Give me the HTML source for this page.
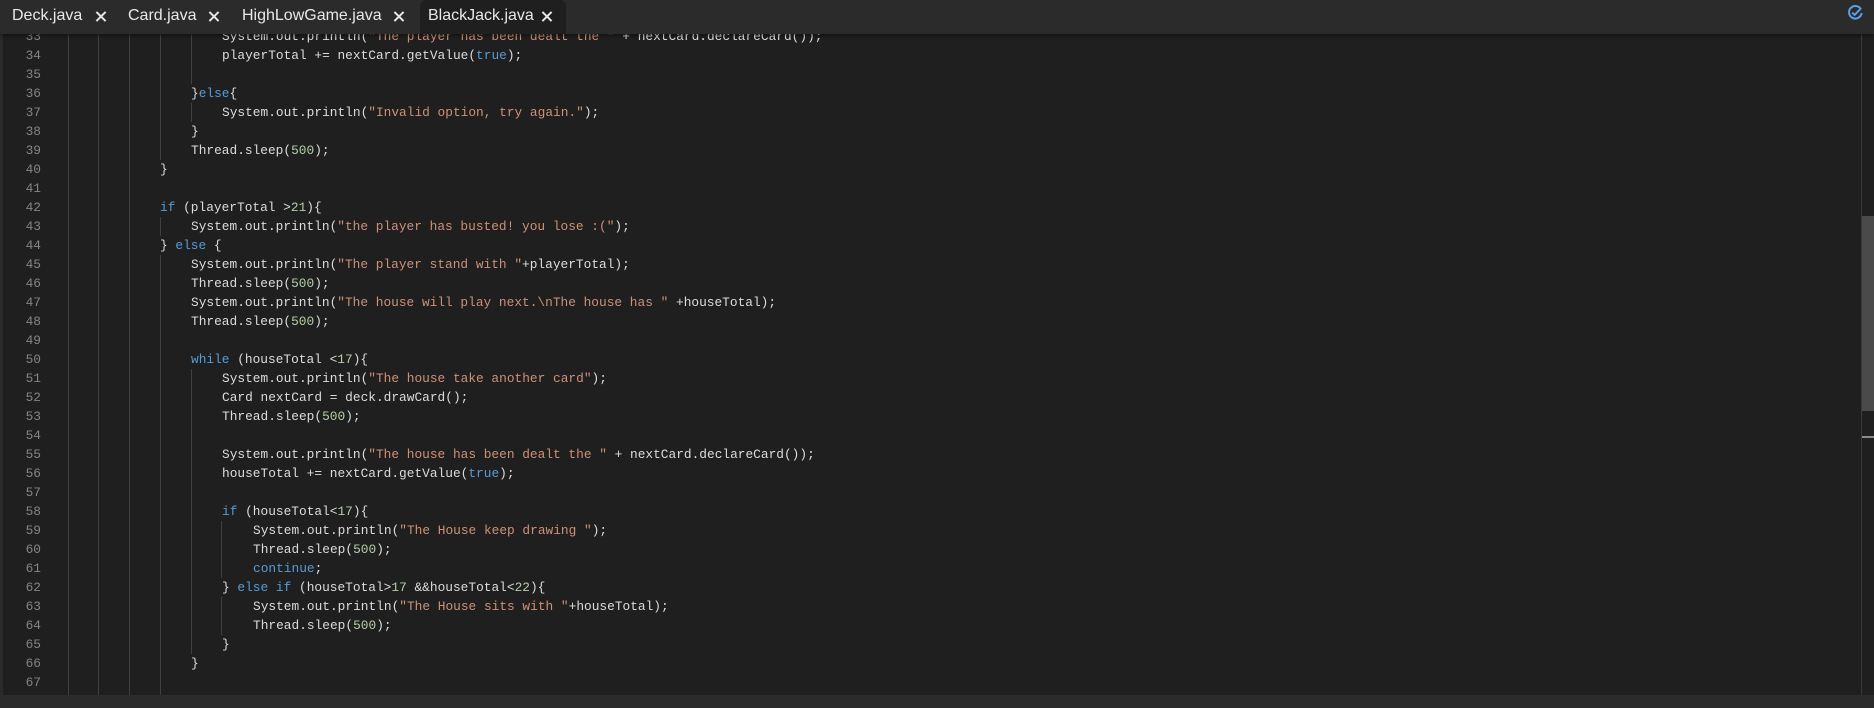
<!DOCTYPE html>
<html><head><meta charset="utf-8"><style>
*{margin:0;padding:0;box-sizing:border-box}
body{width:1874px;height:708px;background:#1f1f1f;position:relative;overflow:hidden;font-family:"Liberation Mono",monospace}
.bar{position:absolute;left:0;top:0;width:1874px;height:34px;background:#2b2b2b;box-shadow:0 2px 3px rgba(0,0,0,.4);z-index:5}
.tab{position:absolute;top:0;height:34px;font:16px "Liberation Sans",sans-serif;color:#e8e8e8;line-height:32px}
.x{position:absolute;top:11px;width:11px;height:11px}
.x:before,.x:after{content:"";position:absolute;left:4.5px;top:-1px;width:2px;height:13px;background:#e8e8e8;transform:rotate(45deg)}
.x:after{transform:rotate(-45deg)}
.act{position:absolute;left:420px;top:0;width:146px;height:34px;background:#1f1f1f;border-radius:6px 6px 0 0}
.ln{position:absolute;left:0;width:41px;text-align:right;color:#858585;font-size:12.83px;line-height:19px;height:19px}
.c{position:absolute;white-space:pre;color:#dcdcdc;font-size:12.83px;line-height:19px;height:19px}
.k{color:#569cd6}.s{color:#ce9178}.n{color:#b5cea8}
.g{position:absolute;width:1px;background:#404040}
.bot{position:absolute;left:0;top:695px;width:1874px;height:13px;background:#2b2b2b}
.sb{position:absolute;left:1861px;top:34px;width:1px;height:661px;background:#3a3a3a}
.th{position:absolute;left:1862px;top:216px;width:12px;height:195px;background:#4a4a4a}
</style></head><body>
<div class="bar">
<div class="act"></div>
<div class="tab" style="left:12px">Deck.java</div><div class="x" style="left:95px"></div>
<div class="tab" style="left:128px">Card.java</div><div class="x" style="left:208px"></div>
<div class="tab" style="left:242px">HighLowGame.java</div><div class="x" style="left:393px"></div>
<div class="tab" style="left:428px">BlackJack.java</div><div class="x" style="left:541px"></div>
<svg style="position:absolute;left:1847px;top:4px" width="17" height="17" viewBox="0 0 17 17"><path d="M14 5.5A6.3 6.3 0 1 0 14.6 9" fill="none" stroke="#5aa0e6" stroke-width="2"/><path d="M5.2 8.6l2.4 2.3 5.3-5.4" fill="none" stroke="#5aa0e6" stroke-width="2"/></svg>
</div>
<div style="position:absolute;left:0;top:34px;width:3px;height:661px;background:#2b2b2b"></div>
<!-- guides -->
<div class="g" style="left:68px;top:27px;height:668px"></div>
<div class="g" style="left:98px;top:27px;height:668px"></div>
<div class="g" style="left:129px;top:27px;height:668px"></div>
<div class="g" style="left:160px;top:27px;height:133px"></div>
<div class="g" style="left:160px;top:217px;height:19px"></div>
<div class="g" style="left:160px;top:255px;height:440px"></div>
<div class="g" style="left:191px;top:27px;height:57px"></div>
<div class="g" style="left:191px;top:103px;height:19px"></div>
<div class="g" style="left:191px;top:369px;height:285px"></div>
<div class="g" style="left:221px;top:521px;height:57px"></div>
<div class="g" style="left:221px;top:597px;height:38px"></div>

<div class="ln" style="top:27px">33</div><div class="c" style="left:222px;top:27px">System.out.println(<span class="s">"The player has been dealt the "</span> + nextCard.declareCard());</div>
<div class="ln" style="top:46px">34</div><div class="c" style="left:222px;top:46px">playerTotal += nextCard.getValue(<span class="k">true</span>);</div>
<div class="ln" style="top:65px">35</div>
<div class="ln" style="top:84px">36</div><div class="c" style="left:191px;top:84px">}<span class="k">else</span>{</div>
<div class="ln" style="top:103px">37</div><div class="c" style="left:222px;top:103px">System.out.println(<span class="s">"Invalid option, try again."</span>);</div>
<div class="ln" style="top:122px">38</div><div class="c" style="left:191px;top:122px">}</div>
<div class="ln" style="top:141px">39</div><div class="c" style="left:191px;top:141px">Thread.sleep(<span class="n">500</span>);</div>
<div class="ln" style="top:160px">40</div><div class="c" style="left:160px;top:160px">}</div>
<div class="ln" style="top:179px">41</div>
<div class="ln" style="top:198px">42</div><div class="c" style="left:160px;top:198px"><span class="k">if</span> (playerTotal &gt;<span class="n">21</span>){</div>
<div class="ln" style="top:217px">43</div><div class="c" style="left:191px;top:217px">System.out.println(<span class="s">"the player has busted! you lose :("</span>);</div>
<div class="ln" style="top:236px">44</div><div class="c" style="left:160px;top:236px">} <span class="k">else</span> {</div>
<div class="ln" style="top:255px">45</div><div class="c" style="left:191px;top:255px">System.out.println(<span class="s">"The player stand with "</span>+playerTotal);</div>
<div class="ln" style="top:274px">46</div><div class="c" style="left:191px;top:274px">Thread.sleep(<span class="n">500</span>);</div>
<div class="ln" style="top:293px">47</div><div class="c" style="left:191px;top:293px">System.out.println(<span class="s">"The house will play next.\nThe house has "</span> +houseTotal);</div>
<div class="ln" style="top:312px">48</div><div class="c" style="left:191px;top:312px">Thread.sleep(<span class="n">500</span>);</div>
<div class="ln" style="top:331px">49</div>
<div class="ln" style="top:350px">50</div><div class="c" style="left:191px;top:350px"><span class="k">while</span> (houseTotal &lt;<span class="n">17</span>){</div>
<div class="ln" style="top:369px">51</div><div class="c" style="left:222px;top:369px">System.out.println(<span class="s">"The house take another card"</span>);</div>
<div class="ln" style="top:388px">52</div><div class="c" style="left:222px;top:388px">Card nextCard = deck.drawCard();</div>
<div class="ln" style="top:407px">53</div><div class="c" style="left:222px;top:407px">Thread.sleep(<span class="n">500</span>);</div>
<div class="ln" style="top:426px">54</div>
<div class="ln" style="top:445px">55</div><div class="c" style="left:222px;top:445px">System.out.println(<span class="s">"The house has been dealt the "</span> + nextCard.declareCard());</div>
<div class="ln" style="top:464px">56</div><div class="c" style="left:222px;top:464px">houseTotal += nextCard.getValue(<span class="k">true</span>);</div>
<div class="ln" style="top:483px">57</div>
<div class="ln" style="top:502px">58</div><div class="c" style="left:222px;top:502px"><span class="k">if</span> (houseTotal&lt;<span class="n">17</span>){</div>
<div class="ln" style="top:521px">59</div><div class="c" style="left:253px;top:521px">System.out.println(<span class="s">"The House keep drawing "</span>);</div>
<div class="ln" style="top:540px">60</div><div class="c" style="left:253px;top:540px">Thread.sleep(<span class="n">500</span>);</div>
<div class="ln" style="top:559px">61</div><div class="c" style="left:253px;top:559px"><span class="k">continue</span>;</div>
<div class="ln" style="top:578px">62</div><div class="c" style="left:222px;top:578px">} <span class="k">else if</span> (houseTotal&gt;<span class="n">17</span> &amp;&amp;houseTotal&lt;<span class="n">22</span>){</div>
<div class="ln" style="top:597px">63</div><div class="c" style="left:253px;top:597px">System.out.println(<span class="s">"The House sits with "</span>+houseTotal);</div>
<div class="ln" style="top:616px">64</div><div class="c" style="left:253px;top:616px">Thread.sleep(<span class="n">500</span>);</div>
<div class="ln" style="top:635px">65</div><div class="c" style="left:222px;top:635px">}</div>
<div class="ln" style="top:654px">66</div><div class="c" style="left:191px;top:654px">}</div>
<div class="ln" style="top:673px">67</div>

<div class="sb"></div><div class="th"></div>
<div style="position:absolute;left:1862px;top:436px;width:12px;height:2px;background:#8a8a8a"></div>
<div class="bot"></div>
</body></html>
